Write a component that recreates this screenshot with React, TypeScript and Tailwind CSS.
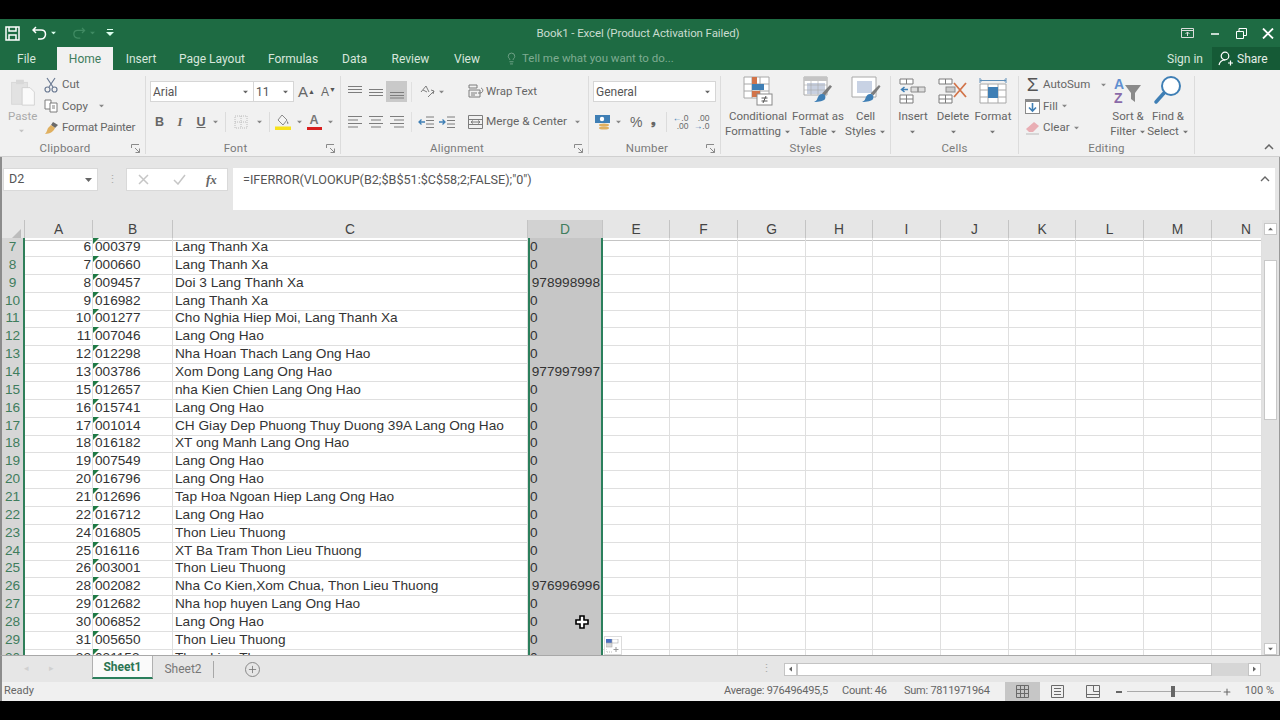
import React from 'react';
import { Plus, Lightbulb } from 'lucide-react';

const GRID_COLS = 'grid grid-cols-[25px_68px_80px_355px_75px_67px_68px_68px_67px_68px_68px_67px_68px_68px_50px]';
const COLUMNS = ['A', 'B', 'C', 'D', 'E', 'F', 'G', 'H', 'I', 'J', 'K', 'L', 'M', 'N'];

const ROWS: [number, string, string, string][] = [
  [6, '000379', 'Lang Thanh Xa', '0'],
  [7, '000660', 'Lang Thanh Xa', '0'],
  [8, '009457', 'Doi 3 Lang Thanh Xa', '978998998'],
  [9, '016982', 'Lang Thanh Xa', '0'],
  [10, '001277', 'Cho Nghia Hiep Moi, Lang Thanh Xa', '0'],
  [11, '007046', 'Lang Ong Hao', '0'],
  [12, '012298', 'Nha Hoan Thach Lang Ong Hao', '0'],
  [13, '003786', 'Xom Dong Lang Ong Hao', '977997997'],
  [15, '012657', 'nha Kien Chien Lang Ong Hao', '0'],
  [16, '015741', 'Lang Ong Hao', '0'],
  [17, '001014', 'CH Giay Dep Phuong Thuy Duong 39A Lang Ong Hao', '0'],
  [18, '016182', 'XT ong Manh Lang Ong Hao', '0'],
  [19, '007549', 'Lang Ong Hao', '0'],
  [20, '016796', 'Lang Ong Hao', '0'],
  [21, '012696', 'Tap Hoa Ngoan Hiep Lang Ong Hao', '0'],
  [22, '016712', 'Lang Ong Hao', '0'],
  [24, '016805', 'Thon Lieu Thuong', '0'],
  [25, '016116', 'XT Ba Tram Thon Lieu Thuong', '0'],
  [26, '003001', 'Thon Lieu Thuong', '0'],
  [28, '002082', 'Nha Co Kien,Xom Chua, Thon Lieu Thuong', '976996996'],
  [29, '012682', 'Nha hop huyen Lang Ong Hao', '0'],
  [30, '006852', 'Lang Ong Hao', '0'],
  [31, '005650', 'Thon Lieu Thuong', '0'],
  [32, '021153', 'Thon Lieu Thuong', '0'],
];

const Caret = ({ className = '' }: { className?: string }) => (
  <svg width="7" height="4" viewBox="0 0 7 4" className={className}>
    <path d="M0 0h7L3.5 4z" fill="currentColor" />
  </svg>
);

const Launcher = () => (
  <svg width="9" height="9" viewBox="0 0 9 9" className="absolute right-[5px] top-[4px] text-[#8a8a8a]">
    <path d="M.5 4V.5H8M8.5 8.5L4 4M8.5 4.5v4h-4" fill="none" stroke="currentColor" />
  </svg>
);

const AlignH = ({ kind }: { kind: 'l' | 'c' | 'r' }) => {
  const xs = kind === 'l' ? [1, 1, 1, 1] : kind === 'c' ? [1, 3, 1, 3] : [1, 5, 1, 5];
  const ws = [14, 10, 14, 10];
  return (
    <svg width="16" height="14" viewBox="0 0 16 14" className="text-[#7d7d7d]">
      {xs.map((x, i) => (
        <rect key={i} x={x} y={1 + i * 3.5} width={ws[i]} height="1" fill="currentColor" />
      ))}
    </svg>
  );
};

const Group = ({ label, width, launcher, children }: { label: string; width: string; launcher?: boolean; children: React.ReactNode }) => (
  <div className={`${width} flex flex-col shrink-0 relative`}>
    <div className="h-[73px] flex">{children}</div>
    <div className={`relative text-center text-[11.5px] leading-[16px] text-[#7a7a7a] tracking-[0.2px] ${launcher ? 'pr-[15px]' : ''}`}>
      {label}
      {launcher && <Launcher />}
    </div>
  </div>
);

const GroupSep = () => <div className="w-px h-[78px] mt-[3px] bg-[#dcdcdc] shrink-0" />;

const BigButton = ({ icon, lines, width, caretLine = false }: { icon: React.ReactNode; lines: string[]; width: string; caretLine?: boolean }) => (
  <div className={`${width} flex flex-col items-center shrink-0`}>
    <div className="h-[36px] flex items-center justify-center">{icon}</div>
    <div className="text-[11.5px] leading-[15px] text-[#666] text-center whitespace-nowrap flex flex-col items-center">
      {lines.map((l, i) => (
        <span key={l} className="flex items-center gap-[3px]">
          {l}
          {i === lines.length - 1 && !caretLine && <Caret className="text-[#777] scale-75" />}
        </span>
      ))}
      {caretLine && <Caret className="text-[#777] mt-[6px] scale-75" />}
    </div>
  </div>
);

const CondFormatIcon = () => (
  <svg width="30" height="30" viewBox="0 0 30 30">
    <path d="M1 1h25v21H1zM1 8h25M1 15h25M9 1v21M17 1v21" fill="#fff" stroke="#a8a8a8" />
    <rect x="9" y="1" width="5" height="7" fill="#d2744a" />
    <rect x="9" y="8" width="12" height="6" fill="#3f7fb5" />
    <rect x="9" y="15" width="8" height="6" fill="#d2744a" />
    <rect x="14" y="18" width="15" height="11" fill="#fff" stroke="#8a8a8a" />
    <path d="M18.5 22h6M18.5 25h6M23 20l-3 7" stroke="#555" fill="none" />
  </svg>
);

const FormatTableIcon = () => (
  <svg width="30" height="30" viewBox="0 0 30 30">
    <path d="M1 1h23v18H1z" fill="#fff" stroke="#a8a8a8" />
    <rect x="1" y="1" width="23" height="4" fill="#c4c4c4" />
    <rect x="4" y="7" width="18" height="11" fill="#c8d0e0" />
    <path d="M8 5v14M15 5v14M1 9h23M1 14h23" stroke="#a8a8a8" fill="none" strokeWidth=".6" />
    <path d="M27 9l2 1.500-7 9-3-2z" fill="#7d7d7d" />
    <path d="M19 18c3 0 4 2 3 5-1 2-6 3-11 3 3-1 3-3 4-5s2-3 4-3z" fill="#3f7fb5" />
  </svg>
);

const CellStylesIcon = () => (
  <svg width="30" height="30" viewBox="0 0 30 30">
    <path d="M1 1h24v20H1z" fill="#fff" stroke="#a8a8a8" />
    <rect x="6" y="5" width="15" height="12" fill="#c8d2e4" />
    <path d="M28 9l1.500 1.500-7 9-3-2z" fill="#7d7d7d" />
    <path d="M19 18c3 0 4 2 3 5-1 2-6 3-11 3 3-1 3-3 4-5s2-3 4-3z" fill="#3f7fb5" />
  </svg>
);

const InsertIcon = () => (
  <svg width="28" height="28" viewBox="0 0 28 28">
    <path d="M1 2h13v5H1zM7.500 2v5M1 18h13v8H1zM7.500 18v8M1 22h13" fill="#fff" stroke="#7d7d7d" />
    <path d="M9 12.500H3M5.500 10l-3 2.500 3 2.500" stroke="#3f7fb5" fill="none" strokeWidth="1.500" />
    <path d="M12 10h7v5h-7zM19 10h7v5h-7z" fill="#ddd" stroke="#8a8a8a" />
  </svg>
);

const DeleteIcon = () => (
  <svg width="30" height="28" viewBox="0 0 30 28">
    <path d="M1 2h13v5H1zM7.500 2v5M1 18h13v8H1zM7.500 18v8M1 22h13" fill="#fff" stroke="#7d7d7d" />
    <rect x="8" y="10" width="9" height="5" fill="#ccc" stroke="#8a8a8a" />
    <path d="M16 6l12 14M28 6L16 20" stroke="#d2744a" strokeWidth="1.800" fill="none" />
  </svg>
);

const FormatCellIcon = () => (
  <svg width="28" height="30" viewBox="0 0 28 30">
    <path d="M1 2v5M27 2v5M2 4.500h24" stroke="#5f8fb8" fill="none" />
    <path d="M3 4l-2 .500 2 .500M25 4l2 .500-2 .500" stroke="#5f8fb8" fill="none" />
    <path d="M1 8h26v19H1zM9 8v19M19 8v19M1 14h26M1 21h26" fill="#fff" stroke="#a8a8a8" />
    <rect x="9" y="11" width="10" height="11" fill="#3f7fb5" />
  </svg>
);

const Ribbon = () => (
  <div className="h-[87px] bg-[#f1f1f1] border-b border-[#d0d0d0] flex pt-[3px] font-['Roboto',sans-serif] relative">
    <Group label="Clipboard" width="w-[145px]" launcher>
      <div className="w-[44px] pl-[9px] flex flex-col items-start shrink-0">
        <svg width="28" height="28" viewBox="0 0 28 32" className="mt-[5px]">
          <rect x="1" y="5" width="18" height="25" fill="#e2e2e2" stroke="#d6d6d6" />
          <rect x="6" y="2" width="9" height="5" fill="#d8d8d8" />
          <path d="M13 11h9l5 5v15H13z" fill="#fafafa" stroke="#cfcfcf" />
        </svg>
        <span className="text-[11.5px] leading-[15px] text-[#aaa] -ml-[1px] mt-[3px]">Paste</span>
        <Caret className="text-[#c4c4c4] ml-[9px] mt-[5px] scale-75" />
      </div>
      <div className="flex flex-col pt-[1px] text-[11.5px] text-[#666] leading-[21.500px] whitespace-nowrap">
        <div className="flex items-center gap-[4px] h-[21.500px]">
          <svg width="14" height="16" viewBox="0 0 14 16" fill="none" stroke="#6b7a93" strokeWidth="1.200">
            <path d="M3 1l6 9M11 1L5 10" />
            <circle cx="3.500" cy="12.500" r="2.500" />
            <circle cx="10.500" cy="12.500" r="2.500" />
          </svg>
          Cut
        </div>
        <div className="flex items-center gap-[4px] h-[21.500px]">
          <svg width="14" height="14" viewBox="0 0 14 14" fill="#fff" stroke="#7d7d7d">
            <path d="M1 1h6v9H1z" />
            <path d="M6 4h7v9H6z" />
            <path d="M8 7h3M8 9h3" />
          </svg>
          <span>Copy</span>
          <Caret className="text-[#888] ml-[6px] scale-75" />
        </div>
        <div className="flex items-center gap-[3px] h-[21.500px]">
          <svg width="15" height="14" viewBox="0 0 15 14">
            <path d="M9 1l5 3-3 3-4-3z" fill="#6a6a6a" />
            <path d="M7 4l4 3c-1 3-5 6-10 6 2-2 2-4 3-6z" fill="#e0b060" />
          </svg>
          <span className="tracking-[-0.2px]">Format Painter</span>
        </div>
      </div>
    </Group>
    <GroupSep />
    <Group label="Font" width="w-[194px]" launcher>
      <div className="flex flex-col pl-[4px]">
        <div className="h-[21px] mt-[8px] flex items-center">
          <div className="w-[104px] h-[21px] bg-white border border-[#d6d6d6] flex items-center justify-between pl-[2px] pr-[4px] text-[12px] text-[#555]">
            Arial <Caret className="text-[#666] scale-75" />
          </div>
          <div className="w-[40px] h-[21px] bg-white border border-l-0 border-[#d6d6d6] flex items-center justify-between pl-[2px] pr-[4px] text-[12px] text-[#555]">
            11 <Caret className="text-[#666] scale-75" />
          </div>
          <span className="ml-[4px] text-[15px] leading-none text-[#666] font-['Liberation_Sans',sans-serif]">A<sup className="text-[7px] text-[#555]">▲</sup></span>
          <span className="ml-[6px] text-[12px] leading-none text-[#666] font-['Liberation_Sans',sans-serif]">A<sup className="text-[7px] text-[#555]">▼</sup></span>
        </div>
        <div className="h-[22px] mt-[9px] flex items-center text-[#666] font-['Liberation_Sans',sans-serif]">
          <span className="w-[19px] text-center text-[12.500px] font-bold">B</span>
          <span className="w-[22px] text-center text-[12.500px] italic font-bold font-['Liberation_Serif',serif]">I</span>
          <span className="w-[20px] text-center text-[12.500px] font-bold underline">U</span>
          <Caret className="text-[#888] ml-[1px] scale-75" />
          <div className="w-px h-[20px] bg-[#dcdcdc] ml-[6px]" />
          <svg width="14" height="14" viewBox="0 0 14 14" fill="none" stroke="#bcbcbc" strokeDasharray="1 1" className="ml-[8px]">
            <path d="M1 1h12v12H1zM7 1v12M1 7h12" />
          </svg>
          <Caret className="text-[#888] ml-[8px] scale-75" />
          <div className="w-px h-[20px] bg-[#dcdcdc] ml-[6px]" />
          <svg width="16" height="16" viewBox="0 0 16 16" className="ml-[5px]">
            <path d="M7 1l5 5-4 5-5-5z" fill="#f4f4f4" stroke="#8a8a8a" />
            <path d="M12 7c1 1 2 2 1 3-1 0-1-2-1-3z" fill="#7d7d7d" />
            <rect y="12.500" width="16" height="3.500" fill="#f7e21c" />
          </svg>
          <Caret className="text-[#888] ml-[5px] scale-75" />
          <div className="relative ml-[3px] w-[16px] h-[16px] flex flex-col items-center">
            <span className="text-[12.500px] leading-[12px] font-bold text-[#777]">A</span>
            <div className="w-[15px] h-[4px] bg-[#d81e1e] mt-[0.500px]" />
          </div>
          <Caret className="text-[#888] ml-[5px] scale-75" />
        </div>
      </div>
    </Group>
    <GroupSep />
    <Group label="Alignment" width="w-[247px]" launcher>
      <div className="flex flex-col pl-[3px] whitespace-nowrap">
        <div className="h-[21px] mt-[8px] flex items-center">
          <div className="w-[63px] flex shrink-0">
            <div className="w-[21px] h-[21px] flex items-center justify-center"><svg width="16" height="14" viewBox="0 0 16 14"><path d="M1 1.500h14M1 4.500h14M1 7.500h14" stroke="#7d7d7d" /></svg></div>
            <div className="w-[21px] h-[21px] flex items-center justify-center"><svg width="16" height="14" viewBox="0 0 16 14"><path d="M1 4.500h14M1 7.500h14M1 10.500h14" stroke="#7d7d7d" /></svg></div>
            <div className="w-[21px] h-[21px] bg-[#c9c9c9] flex items-center justify-center"><svg width="16" height="14" viewBox="0 0 16 14"><path d="M1 7.500h14M1 10.500h14M1 13h14" stroke="#7d7d7d" /></svg></div>
          </div>
          <div className="w-[61px] flex items-center shrink-0">
            <div className="w-px h-[20px] bg-[#e0e0e0] ml-[4px]" />
            <svg width="15" height="15" viewBox="0 0 15 15" fill="none" stroke="#7d7d7d" className="ml-[8px]">
              <path d="M1 8l5-6 3 6M3 6l4 2M8 13l6-6M11 6l3 1-1 3" />
            </svg>
            <Caret className="text-[#888] ml-[3px] scale-75" />
          </div>
          <svg width="16" height="15" viewBox="0 0 16 15" fill="none" stroke="#7d7d7d" className="shrink-0">
            <path d="M1 1h8v3H1zM1 6h11v7H1zM3 9h6M3 11h4M13 4c3 1 2 5-1 5h-2" />
          </svg>
          <span className="ml-[2px] text-[11.5px] text-[#666]">Wrap Text</span>
        </div>
        <div className="h-[22px] mt-[9px] flex items-center">
          <div className="w-[63px] flex shrink-0">
            <div className="w-[21px] flex justify-center"><AlignH kind="l" /></div>
            <div className="w-[21px] flex justify-center"><AlignH kind="c" /></div>
            <div className="w-[21px] flex justify-center"><AlignH kind="r" /></div>
          </div>
          <div className="w-[61px] flex items-center shrink-0">
            <div className="w-px h-[20px] bg-[#e0e0e0] ml-[4px]" />
            <svg width="16" height="13" viewBox="0 0 16 13" className="ml-[6px]">
              <path d="M8 1h8M8 4.500h8M8 8h8M8 11.500h8" stroke="#7d7d7d" />
              <path d="M7 6H1M3.500 3.500L1 6l2.500 2.500" stroke="#3f7fb5" fill="none" strokeWidth="1.300" />
            </svg>
            <svg width="16" height="13" viewBox="0 0 16 13" className="ml-[5px]">
              <path d="M8 1h8M8 4.500h8M8 8h8M8 11.500h8" stroke="#7d7d7d" />
              <path d="M0 6h6M3.500 3.500L6 6 3.500 8.500" stroke="#3f7fb5" fill="none" strokeWidth="1.300" />
            </svg>
          </div>
          <svg width="15" height="14" viewBox="0 0 15 14" fill="none" stroke="#7d7d7d" className="shrink-0">
            <path d="M.5.5h14v13H.500zM.5 4.500h14M.5 9.500h14M3 7h9M3 7l2-1.500M3 7l2 1.500M12 7l-2-1.500M12 7l-2 1.500" />
          </svg>
          <span className="ml-[3px] text-[11.8px] text-[#666]">Merge &amp; Center</span>
          <Caret className="text-[#888] ml-[7px] scale-75" />
        </div>
      </div>
    </Group>
    <GroupSep />
    <Group label="Number" width="w-[131px]" launcher>
      <div className="flex flex-col pl-[4px]">
        <div className="w-[123px] h-[21px] mt-[8px] bg-white border border-[#d6d6d6] flex items-center justify-between pl-[2px] pr-[4px] text-[12px] text-[#555]">
          General <Caret className="text-[#666] scale-75" />
        </div>
        <div className="h-[22px] mt-[9px] flex items-center">
          <svg width="16" height="15" viewBox="0 0 16 15" className="ml-[2px]">
            <rect x="0" y="0" width="15" height="8" fill="#3f7fb5" />
            <circle cx="7" cy="4" r="2.200" fill="#fff" />
            <ellipse cx="9" cy="10" rx="5" ry="1.500" fill="#e0b060" />
            <ellipse cx="9" cy="13" rx="5" ry="1.500" fill="#e0b060" />
          </svg>
          <Caret className="text-[#888] ml-[4px] scale-75" />
          <span className="ml-[8px] text-[14px] text-[#666] font-['Liberation_Sans',sans-serif]">%</span>
          <span className="ml-[9px] text-[12px] font-bold text-[#666] leading-none -mt-[4px]">❟</span>
          <div className="w-px h-[20px] bg-[#dcdcdc] ml-[10px]" />
          <div className="ml-[5px] w-[16px] text-[8.500px] leading-[8px] text-[#6b6b6b] font-['Liberation_Sans',sans-serif] text-right">
            <span className="text-[#3f7fb5]">←</span>.0<br />.00
          </div>
          <div className="ml-[5px] w-[16px] text-[8.500px] leading-[8px] text-[#6b6b6b] font-['Liberation_Sans',sans-serif] text-right">
            .00<br /><span className="text-[#3f7fb5]">→</span>.0
          </div>
        </div>
      </div>
    </Group>
    <GroupSep />
    <Group label="Styles" width="w-[169px]">
      <BigButton icon={<CondFormatIcon />} lines={['Conditional', 'Formatting']} width="w-[74px]" />
      <BigButton icon={<FormatTableIcon />} lines={['Format as', 'Table']} width="w-[46px]" />
      <BigButton icon={<CellStylesIcon />} lines={['Cell', 'Styles']} width="w-[49px]" />
    </Group>
    <GroupSep />
    <Group label="Cells" width="w-[127px]">
      <BigButton icon={<InsertIcon />} lines={['Insert']} width="w-[44px]" caretLine />
      <BigButton icon={<DeleteIcon />} lines={['Delete']} width="w-[36px]" caretLine />
      <BigButton icon={<FormatCellIcon />} lines={['Format']} width="w-[44px]" caretLine />
    </Group>
    <GroupSep />
    <Group label="Editing" width="w-[175px]">
      <div className="flex flex-col w-[89px] pl-[6px] pt-[1px] text-[11.5px] text-[#666] shrink-0">
        <div className="h-[21.500px] flex items-center gap-[3px]">
          <span className="w-[15px] text-[19px] leading-none text-[#555] text-center font-['Liberation_Sans',sans-serif]">Σ</span>
          AutoSum <Caret className="text-[#888] ml-[7px] scale-75" />
        </div>
        <div className="h-[21.500px] flex items-center gap-[3px]">
          <svg width="15" height="15" viewBox="0 0 15 15" className="shrink-0">
            <rect x=".5" y=".5" width="14" height="14" fill="#fff" stroke="#8a8a8a" />
            <rect x=".5" y=".5" width="14" height="2.500" fill="#8a8a8a" />
            <path d="M7.500 4v8M4 8.500l3.500 3.500L11 8.500" fill="none" stroke="#3f7fb5" strokeWidth="1.600" />
          </svg>
          Fill <Caret className="text-[#888] scale-75" />
        </div>
        <div className="h-[21.500px] flex items-center gap-[3px]">
          <svg width="15" height="14" viewBox="0 0 15 14" className="shrink-0">
            <path d="M9 1l5 4-6 6H4L1 8z" fill="#e9aeb4" />
            <path d="M1 13h13" stroke="#bbb" />
          </svg>
          Clear <Caret className="text-[#888] scale-75" />
        </div>
      </div>
      <BigButton
        icon={
          <svg width="30" height="30" viewBox="0 0 30 30">
            <text x="1" y="13" fontSize="14" fontWeight="700" fill="#5f8fd0" fontFamily="Liberation Sans">A</text>
            <text x="1" y="27" fontSize="14" fontWeight="700" fill="#8a6aa8" fontFamily="Liberation Sans">Z</text>
            <path d="M12 9h16l-6 8v9l-4-3v-6z" fill="#8a8a8a" />
          </svg>
        }
        lines={['Sort &', 'Filter']}
        width="w-[40px]"
      />
      <BigButton
        icon={
          <svg width="30" height="30" viewBox="0 0 30 30" className="mt-[-2px]">
            <circle cx="18" cy="11" r="9" fill="#fff" stroke="#3f7fb5" strokeWidth="2" />
            <path d="M11 18L3 27" stroke="#3f7fb5" strokeWidth="3.500" strokeLinecap="round" />
          </svg>
        }
        lines={['Find &', 'Select']}
        width="w-[40px]"
      />
    </Group>
    <GroupSep />
    <div className="flex-1 flex justify-end items-end pr-[6px] pb-[6px]">
      <svg width="10" height="6" viewBox="0 0 10 6" fill="none" stroke="#666" strokeWidth="1.500">
        <path d="M1 5l4-4 4 4" />
      </svg>
    </div>
  </div>
);

const SheetRow = ({ row, index }: { row: [number, string, string, string]; index: number }) => {
  const [a, b, c, d] = row;
  const wide = d.length > 1;
  return (
    <div className={`${GRID_COLS} h-[17.860px] shrink-0 text-[13.650px] leading-[18px] text-[#333] font-['Liberation_Sans',sans-serif]`}>
      <div className="bg-[#d6d6d6] border-b border-[#c2c2c2] border-l-2 border-l-[#8c8c8c] border-r-2 border-r-[#2f7f59] text-[#3f7d5d] text-center">
        {index + 7}
      </div>
      <div className="border-b border-r border-[#dfdfdf] text-right pr-[1px]">{a}</div>
      <div className="border-b border-r border-[#dfdfdf] pl-[2px] relative">
        <svg width="6" height="6" viewBox="0 0 6 6" className="absolute left-0 top-0">
          <path d="M0 0h6L0 6z" fill="#1f7a45" />
        </svg>
        {b}
      </div>
      <div className="border-b border-r border-[#dfdfdf] pl-[2px] whitespace-nowrap overflow-hidden">{c}</div>
      <div className={`bg-[#c6c6c6] border-b border-[#b8b8b8] border-x-2 border-x-[#2b7f5c] ${wide ? 'text-right pr-[1px]' : ''}`}>{d}</div>
      {COLUMNS.slice(4).map(col => (
        <div key={col} className="border-b border-r border-[#dfdfdf]" />
      ))}
    </div>
  );
};

export default function App() {
  return (
    <div className="w-[1280px] h-[720px] bg-black flex flex-col overflow-hidden font-['Roboto',sans-serif]">
      <div className="h-[19px] shrink-0" />
      {/* title bar */}
      <div className="h-[28px] shrink-0 bg-[#1e6b43] flex items-center text-white relative">
        <div className="flex items-center pl-[5px] w-[420px]">
          <svg width="15" height="15" viewBox="0 0 15 15" fill="none" stroke="#fff" strokeWidth="1.500">
            <path d="M1 1h13v13H1zM4 1v4h7V1M4 14V9h7v5" />
          </svg>
          <svg width="15" height="14" viewBox="0 0 15 14" fill="none" stroke="#fff" strokeWidth="1.500" className="ml-[12px]">
            <path d="M4 1L1 4l3 3M1 4h8c6 0 6 8 0 9H6" />
          </svg>
          <Caret className="text-[#dfe] ml-[3px] scale-75" />
          <svg width="14" height="12" viewBox="0 0 15 14" fill="none" stroke="#3f8a62" strokeWidth="1.500" className="ml-[15px]">
            <path d="M11 1l3 3-3 3M14 4H6C0 4 0 12 6 13h3" />
          </svg>
          <Caret className="text-[#3f8a62] ml-[3px] scale-75" />
          <svg width="8" height="8" viewBox="0 0 8 8" className="ml-[10px]" fill="#dfe">
            <rect x="1" y="0" width="6" height="1" />
            <path d="M0 3h8L4 7z" />
          </svg>
        </div>
        <div className="absolute left-0 right-0 top-[6px] text-center text-[11.5px] tracking-[-0.1px] leading-[16px] text-[#c9dcd0] pr-[4px] pointer-events-none">
          Book1 - Excel (Product Activation Failed)
        </div>
        <div className="ml-auto flex items-center gap-[14px] pr-[5px] text-white">
          <svg width="13" height="10" viewBox="0 0 13 10" fill="none" stroke="#dcdcdc">
            <path d="M.5.5h12v9H.500zM.5 2.500h12M6.500 8V4M4.500 6l2-2 2 2" />
          </svg>
          <svg width="14" height="10" viewBox="0 0 14 10"><path d="M3 6h8" stroke="#fff" strokeWidth="1.500" /></svg>
          <svg width="11" height="11" viewBox="0 0 11 11" fill="none" stroke="#fff">
            <path d="M.5 3.500h7v7h-7zM3 3.500V.5h7.500v7h-3" />
          </svg>
          <svg width="14" height="11" viewBox="0 0 14 11" fill="none" stroke="#fff" strokeWidth="1.800">
            <path d="M2 .5l10 10M12 .5l-10 10" />
          </svg>
        </div>
      </div>
      {/* tabs */}
      <div className="h-[23px] shrink-0 bg-[#1e6b43] flex items-stretch text-[12px] text-[#d7e6dc] relative">
        <div className="w-[57px] pl-[17px] flex items-center">File</div>
        <div className="w-[56px] bg-[#f1f1f1] text-[#3f7d5d] flex items-center justify-center">Home</div>
        {[
          ['Insert', 'w-[56px]'],
          ['Page Layout', 'w-[86px]'],
          ['Formulas', 'w-[76px]'],
          ['Data', 'w-[47px]'],
          ['Review', 'w-[65px]'],
          ['View', 'w-[48px]'],
        ].map(([t, w]) => (
          <div key={t} className={`${w} flex items-center justify-center`}>{t}</div>
        ))}
        <div className="flex items-center text-[#7eab92] ml-[14px] gap-[4px] text-[11.500px]">
          <Lightbulb size={13} strokeWidth={1.500} />
          <span>Tell me what you want to do...</span>
        </div>
        <div className="ml-auto flex items-stretch">
          <div className="flex items-center pr-[9px]">Sign in</div>
          <div className="w-[68px] bg-[#155a36] flex items-center gap-[4px] pl-[6px] text-[#e4eee8]">
            <svg width="15" height="15" viewBox="0 0 15 15" fill="none" stroke="#fff" strokeWidth="1.200">
              <circle cx="7" cy="5" r="3.800" />
              <path d="M1 14c1-4 3-5 6-5M10 12h5M12.500 9.500v5" />
            </svg>
            Share
          </div>
        </div>
      </div>
      <Ribbon />
      {/* formula bar */}
      <div className="h-[63px] shrink-0 bg-[#e6e6e6] flex items-start pt-[11px] border-l-2 border-[#8c8c8c] border-r border-r-[#9a9a9a] relative">
        <div className="w-[95px] h-[23px] ml-[1px] bg-white border border-[#d9d9d9] flex items-center justify-between px-[5px] text-[12.500px] text-[#555]">
          D2 <Caret className="text-[#666]" />
        </div>
        <span className="w-[28px] text-center text-[#aaa] text-[11px] leading-[23px] tracking-tight">⋮</span>
        <div className="w-[102px] h-[23px] bg-white border border-[#d9d9d9] flex items-center text-[#c4c4c4]">
          <svg width="11" height="11" viewBox="0 0 11 11" className="ml-[11px]" fill="none" stroke="#c6c6c6" strokeWidth="1.500"><path d="M1 1l9 9M10 1l-9 9" /></svg>
          <svg width="13" height="11" viewBox="0 0 13 11" className="ml-[24px]" fill="none" stroke="#c6c6c6" strokeWidth="1.500"><path d="M1 6l4 4 7-9" /></svg>
          <span className="ml-[20px] text-[13px] italic font-bold text-[#666] font-['Liberation_Serif',serif]">fx</span>
        </div>
        <div className="ml-[5px] w-[1042px] h-[42px] bg-white text-[12.600px] leading-[23px] text-[#555] pl-[10px] flex justify-between pr-[5px]">
          <span>=IFERROR(VLOOKUP(B2;$B$51:$C$58;2;FALSE);"0")</span>
          <svg width="10" height="6" viewBox="0 0 10 6" fill="none" stroke="#666" strokeWidth="1.400" className="mt-[8px]"><path d="M1 5l4-4 4 4" /></svg>
        </div>
      </div>
      {/* sheet */}
      <div className="h-[435px] shrink-0 flex bg-white relative overflow-hidden border-r border-r-[#9a9a9a]">
        <div className="w-[1262px] flex flex-col shrink-0">
          <div className={`${GRID_COLS} h-[18px] shrink-0 bg-[#e6e6e6] text-[13.800px] leading-[19px] text-[#444] font-['Liberation_Sans',sans-serif]`}>
            <div className="flex items-end justify-end border-l-2 border-l-[#8c8c8c] border-r border-b border-[#c2c2c2] pb-[2px] pr-[3px]">
              <svg width="9" height="9" viewBox="0 0 9 9"><path d="M9 0v9H0z" fill="#bcbcbc" /></svg>
            </div>
            {COLUMNS.map(col => (
              <div key={col} className={`text-center border-r border-b border-[#c4c4c4] ${col === 'D' ? 'bg-[#d2d2d2] text-[#3f7d5d] border-b-2 border-b-[#2b7f5c]' : ''} ${col === 'N' ? 'pl-[18px] border-r-0' : ''}`}>{col}</div>
            ))}
          </div>
          {ROWS.map((row, i) => (
            <SheetRow key={row[1]} row={row} index={i} />
          ))}
        </div>
        <div className="flex-1 bg-[#e2e2e2] flex flex-col items-center pt-[3px]">
          <div className="w-[13px] h-[12px] bg-white border border-[#c8c8c8] flex items-center justify-center">
            <Caret className="text-[#666] rotate-180 scale-75" />
          </div>
          <div className="w-[13px] h-[160px] mt-[25px] bg-white border border-[#c8c8c8]" />
          <div className="w-[13px] h-[12px] bg-white border border-[#c8c8c8] flex items-center justify-center mt-auto">
            <Caret className="text-[#666] scale-75" />
          </div>
        </div>
        {/* quick analysis and mouse cursor */}
        <div className="absolute left-[604px] top-[416px] w-[18px] h-[19px] bg-white border border-[#dcdcdc] flex items-center justify-center">
          <svg width="14" height="14" viewBox="0 0 14 14">
            <rect x="0" y="0" width="6" height="4" fill="#4a6fc0" />
            <rect x="6" y="0" width="6" height="4" fill="#fff" stroke="#aaa" strokeWidth=".6" />
            <rect x="0" y="4" width="6" height="4" fill="#d8d8d8" stroke="#aaa" strokeWidth=".6" />
            <path d="M0 10v3h6" stroke="#bbb" fill="none" strokeDasharray="1 1" />
            <path d="M10 8v5M7.500 10.500h5" stroke="#999" />
          </svg>
        </div>
        <svg width="14" height="14" viewBox="0 0 14 14" className="absolute left-[575px] top-[395px]">
          <path d="M5 1h4v4h4v4H9v4H5V9H1V5h4z" fill="#fff" stroke="#000" strokeWidth="1.600" />
        </svg>
      </div>
      {/* sheet tabs */}
      <div className="h-[27px] shrink-0 bg-[#e6e6e6] border-t border-[#a8a8a8] flex items-center text-[12px] border-l-2 border-l-[#8c8c8c]">
        <div className="w-[90px] flex items-center text-[#d0d0d0] text-[9px] pl-[22px] gap-[20px]">
          <span>◂</span><span>▸</span>
        </div>
        <div className="w-[61px] h-[23px] self-start bg-[#fafafa] border-x border-[#b0b0b0] border-b-2 border-b-[#2b7f5c] flex items-center justify-center font-bold text-[#2b7552]">Sheet1</div>
        <div className="w-[60px] text-center text-[#777]">Sheet2</div>
        <div className="w-px h-[17px] bg-[#a8a8a8]" />
        <Plus size={15} strokeWidth={1.800} className="ml-[31px] rounded-full border border-[#888] text-[#777] p-[1px]" />
        <span className="ml-[501px] text-[#aaa] text-[11px]">⋮</span>
        <div className="ml-[12px] w-[13px] h-[13px] bg-white border border-[#c4c4c4] flex items-center justify-center">
          <Caret className="text-[#666] rotate-90 scale-75" />
        </div>
        <div className="w-[415px] h-[13px] bg-white border border-[#c4c4c4]" />
        <div className="w-[36px] h-[13px] bg-[#d6d6d6]" />
        <div className="w-[13px] h-[13px] bg-white border border-[#c4c4c4] flex items-center justify-center">
          <Caret className="text-[#666] -rotate-90 scale-75" />
        </div>
      </div>
      {/* status bar */}
      <div className="h-[19px] shrink-0 bg-[#f0f0f0] flex items-center text-[11px] text-[#666] border-l-2 border-l-[#8c8c8c] whitespace-nowrap">
        <span className="pl-[2px] w-[722px]">Ready</span>
        <span className="w-[118px] tracking-[-0.25px]">Average: 976496495,5</span>
        <span className="w-[62px] tracking-[-0.25px]">Count: 46</span>
        <span className="w-[101px] tracking-[-0.25px]">Sum: 7811971964</span>
        <div className="w-[35px] h-[19px] bg-[#c6c6c6] flex items-center justify-center">
          <svg width="13" height="13" viewBox="0 0 13 13" fill="none" stroke="#6a6a6a"><path d="M.5.5h12v12H.500zM.5 4.500h12M.5 8.500h12M4.500.5v12M8.500.5v12" /></svg>
        </div>
        <svg width="13" height="13" viewBox="0 0 13 13" fill="none" stroke="#6a6a6a" className="ml-[11px]"><path d="M.5.5h12v12H.500zM3 3.500h7M3 6.500h7M3 9.500h7" /></svg>
        <svg width="14" height="13" viewBox="0 0 14 13" fill="none" stroke="#6a6a6a" className="ml-[22px]"><path d="M.5.5h13v12H.500zM.5 9.500h13M7.500.5v6h6" /></svg>
        <div className="ml-[16px] w-[6px] h-[2px] bg-[#666]" />
        <div className="ml-[5px] w-[94px] h-px bg-[#aaa] flex items-center pl-[44px]">
          <div className="w-[4px] h-[11px] bg-[#666]" />
        </div>
        <Plus size={10} strokeWidth={2.500} className="ml-[1px] text-[#666]" />
        <span className="ml-auto pr-[6px]">100 %</span>
      </div>
      <div className="flex-1" />
    </div>
  );
}
